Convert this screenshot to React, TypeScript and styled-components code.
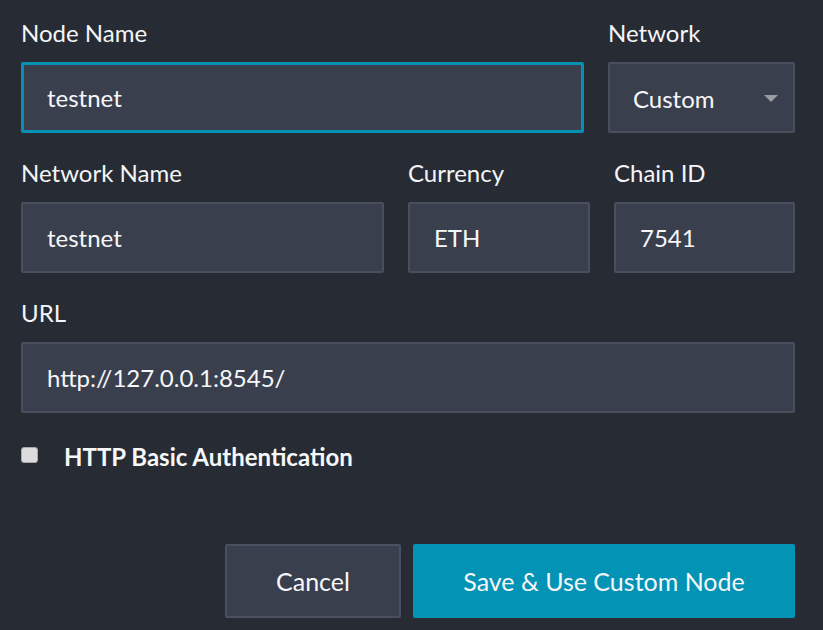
import styled, { createGlobalStyle } from "styled-components";

const GlobalStyle = createGlobalStyle`
	html, body {
		margin: 0;
		padding: 0;
		background: #272b34;
	}
	body {
		font-family: Lato, "Open Sans", sans-serif;
		color: #f2f3f5;
	}
`;

type Field = { label: string; value: string };

const rowTwo: Field[] = [
	{ label: "Network Name", value: "testnet" },
	{ label: "Currency", value: "ETH" },
	{ label: "Chain ID", value: "7541" },
];

export default function App() {
	return (
		<>
			<GlobalStyle />
			<Wrapper>
				<Row $columns="563px 187px">
					<Group>
						<Label>Node Name</Label>
						<Input $focused defaultValue="testnet" readOnly />
					</Group>
					<Group>
						<Label>Network</Label>
						<Select>
							<span>Custom</span>
							<Caret />
						</Select>
					</Group>
				</Row>
				<Row $columns="363px 182px 181px">
					{rowTwo.map((f) => (
						<Group key={f.label}>
							<Label>{f.label}</Label>
							<Input defaultValue={f.value} readOnly />
						</Group>
					))}
				</Row>
				<Row $columns="1fr" $last>
					<Group>
						<Label>URL</Label>
						<Input defaultValue="http://127.0.0.1:8545/" readOnly />
					</Group>
				</Row>
				<CheckRow>
					<Checkbox type="checkbox" />
					<CheckLabel>HTTP Basic Authentication</CheckLabel>
				</CheckRow>
				<Actions>
					<Button $width={176}>Cancel</Button>
					<Button $width={382} $primary>
						Save &amp; Use Custom Node
					</Button>
				</Actions>
			</Wrapper>
		</>
	);
}

const Wrapper = styled.div`
	width: 774px;
	padding: 19px 28px 0 21px;
`;
const Row = styled.div<{ $columns: string; $last?: boolean }>`
	display: grid;
	grid-template-columns: ${(p) => p.$columns};
	column-gap: 24px;
	margin-bottom: ${(p) => (p.$last ? 0 : 26)}px;
`;
const Group = styled.div`
	display: flex;
	flex-direction: column;
`;
const Label = styled.label`
	font-size: 24px;
	line-height: 28px;
	margin-bottom: 15px;
	color: #f4f5f7;
`;
const Input = styled.input<{ $focused?: boolean }>`
	box-sizing: border-box;
	height: 71px;
	width: 100%;
	margin: 0;
	background: #3a3f4e;
	border: ${(p) => (p.$focused ? "3px solid #0591b3" : "2px solid #4a4f5f")};
	border-radius: 2px;
	padding: 0 0 0 ${(p) => (p.$focused ? 23 : 24)}px;
	font-family: Lato, sans-serif;
	font-size: 24px;
	color: #f6f7f9;
	outline: none;
`;
const Select = styled.div`
	box-sizing: border-box;
	height: 71px;
	display: flex;
	align-items: center;
	justify-content: space-between;
	background: #3a3f4e;
	border: 2px solid #4a4f5f;
	border-radius: 2px;
	padding: 2px 15px 0 23px;
	font-size: 24px;
	color: #f6f7f9;
`;
const Caret = styled.span`
	width: 0;
	height: 0;
	border-left: 7px solid transparent;
	border-right: 7px solid transparent;
	border-top: 7px solid #9a9ca3;
`;
const CheckRow = styled.div`
	display: flex;
	align-items: center;
	height: 30px;
	margin-top: 27px;
`;
const Checkbox = styled.input`
	appearance: none;
	box-sizing: border-box;
	width: 17px;
	height: 16px;
	margin: 0 26px 0 0;
	background: #dcdcdc;
	border: 1px solid #a9a9a9;
	border-radius: 3px;
`;
const CheckLabel = styled.span`
	font-size: 24px;
	font-weight: 700;
	color: #f6f7f9;
	padding-top: 3px;
`;
const Actions = styled.div`
	display: flex;
	justify-content: flex-end;
	gap: 12px;
	margin-top: 74px;
`;
const Button = styled.button<{ $width: number; $primary?: boolean }>`
	box-sizing: border-box;
	width: ${(p) => p.$width}px;
	height: 74px;
	border-radius: 2px;
	border: 2px solid ${(p) => (p.$primary ? "#0293b5" : "#4b5061")};
	background: ${(p) => (p.$primary ? "#0293b5" : "#3a3f4e")};
	color: #f6f7f9;
	font-family: Lato, sans-serif;
	font-size: 25px;
	cursor: pointer;
`;
